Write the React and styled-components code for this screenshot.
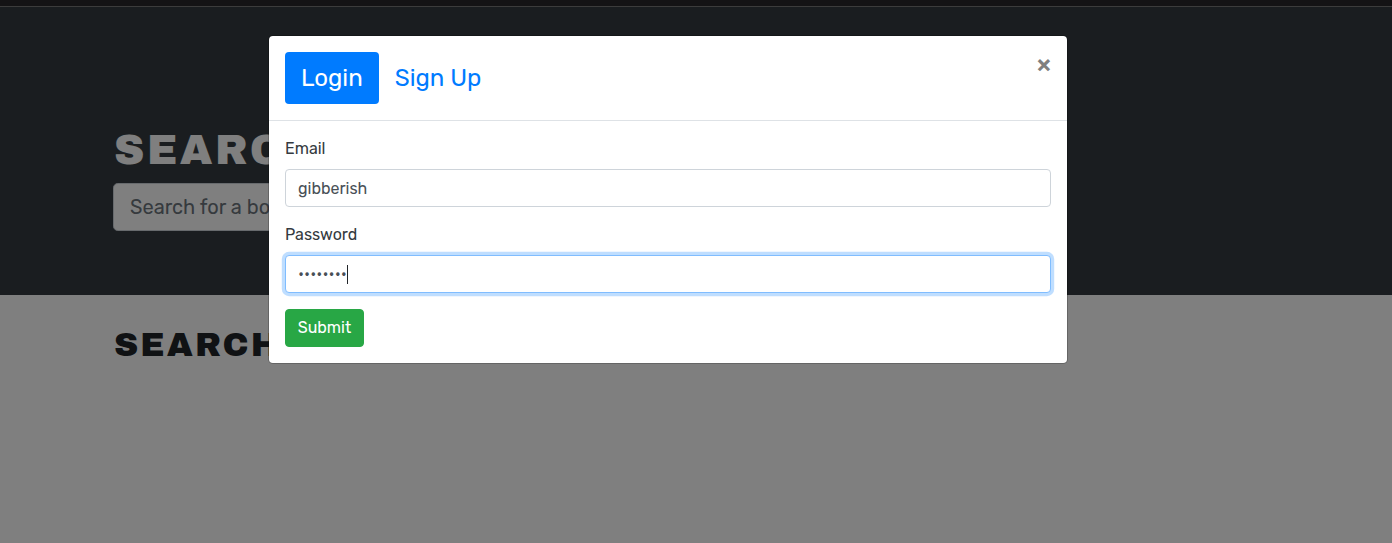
import React from "react";
import styled, { createGlobalStyle } from "styled-components";

const Global = createGlobalStyle`
  html, body { margin: 0; padding: 0; height: 100%; background: #fff; }
  body { font-family: Rubik, Inter, "Noto Sans", "Liberation Sans", sans-serif; color: #212529; overflow: hidden; }
  * { box-sizing: border-box; }
`;
const Page = styled.div`position: relative; width: 1392px; height: 543px; overflow: hidden;`;
const TopBar = styled.div`height: 7px; background: #28262b; border-bottom: 1px solid #787878;`;
const Hero = styled.section`height: 288px; background: #343a40; padding: 121px 0 0 113px;`;
const HeroTitle = styled.h1`
  margin: 0 0 11px 1px; font: 400 42px/44px "Archivo Black", Inter, sans-serif; letter-spacing: 2.6px;
  color: #fff; height: 44px; white-space: nowrap;
`;
const SearchBox = styled.input`
  display: block; width: 500px; height: 48px; padding: 8px 16px; border: 1px solid #ced4da; border-radius: 4.8px;
  font: 400 20px/1.5 Rubik, Inter, sans-serif; background: #fff; color: #495057;
  &::placeholder { color: #6c757d; opacity: 1; }
`;
const Results = styled.section`padding: 28px 0 0 114px;`;
const ResultsTitle = styled.h2`
  margin: 0; font: 400 33.6px/44px "Archivo Black", Inter, sans-serif; letter-spacing: 2.1px;
  color: #212529; white-space: nowrap;
`;
const Overlay = styled.div`position: absolute; inset: 0; background: rgba(0,0,0,.5); padding: 35px 0 0 268px;`;
const Modal = styled.div`width: 800px; height: 329px; background: #fff; border-radius: 4.8px; border: 1px solid rgba(0,0,0,.2); display: flex; flex-direction: column; background-clip: padding-box;`;
const ModalHead = styled.header`position: relative; height: 85px; padding: 16px; border-bottom: 1px solid #dee2e6; display: flex;`;
const Tab = styled.a`
  display: flex; align-items: center; height: 52px; padding: 0 16px; border-radius: 4px; font-size: 24px; line-height: 36px;
  color: ${p => (p.$active ? "#fff" : "#007bff")}; background: ${p => (p.$active ? "#007bff" : "transparent")};
`;
const Close = styled.span`position: absolute; top: 13px; right: 15px; font: 700 24px/30px Inter, sans-serif; color: #7f7f7f;`;
const ModalBody = styled.form`padding: 16px; display: flex; flex-direction: column;`;
const Field = styled.div`display: flex; flex-direction: column; margin-bottom: 16px;`;
const Label = styled.label`font-size: 16px; line-height: 24px; margin-bottom: 8px; color: #343a40;`;
const Input = styled.div`
  height: 38px; padding: 0 12px; display: flex; align-items: center; border-radius: 4px; font-size: 16px; color: #495057; background: #fff;
  border: 1px solid ${p => (p.$focus ? "#80bdff" : "#ced4da")};
  box-shadow: ${p => (p.$focus ? "0 0 0 3.2px rgba(0,123,255,.25)" : "none")};
`;
const Dots = styled.span`font-size: 16px; line-height: 1;`;
const Caret = styled.span`display: inline-block; width: 1px; height: 19px; background: #212529;`;
const Submit = styled.button`
  width: 79px; height: 38px; border: 1px solid #28a745; background: #28a745; color: #fff; border-radius: 4px; font: 400 16px/24px Rubik, Inter, sans-serif; padding: 0;
`;

export default function App() {
  return (
    <Page>
      <Global />
      <TopBar />
      <Hero>
        <HeroTitle>SEARCH</HeroTitle>
        <SearchBox placeholder="Search for a book" readOnly />
      </Hero>
      <Results><ResultsTitle>SEARCH</ResultsTitle></Results>
      <Overlay>
        <Modal>
          <ModalHead>
            <Tab $active>Login</Tab>
            <Tab>Sign Up</Tab>
            <Close>×</Close>
          </ModalHead>
          <ModalBody>
            <Field>
              <Label>Email</Label>
              <Input>gibberish</Input>
            </Field>
            <Field>
              <Label>Password</Label>
              <Input $focus><Dots>••••••••</Dots><Caret /></Input>
            </Field>
            <div><Submit type="button">Submit</Submit></div>
          </ModalBody>
        </Modal>
      </Overlay>
    </Page>
  );
}
